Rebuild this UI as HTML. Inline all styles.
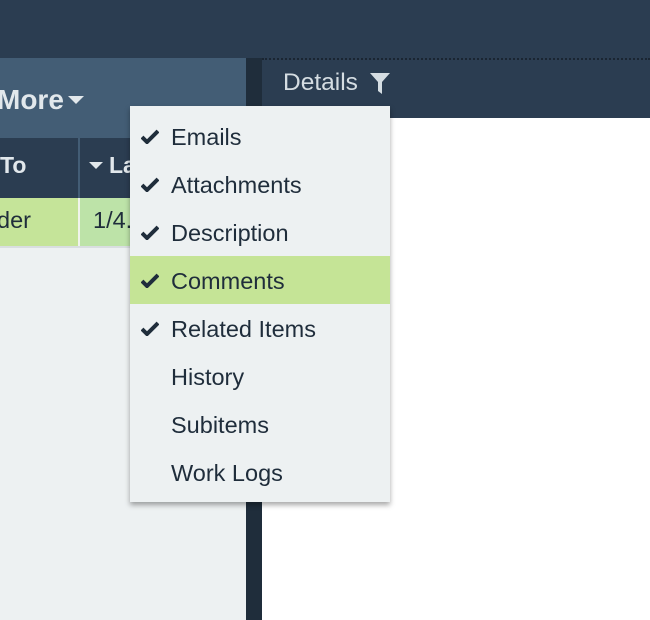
<!DOCTYPE html>
<html><head><style>
*{margin:0;padding:0;box-sizing:border-box}
body{width:650px;height:620px;overflow:hidden;background:#2b3d51;font-family:"Liberation Sans",Arial,sans-serif;position:relative}
.a{position:absolute}
.menu{left:130px;top:106px;width:260px;height:396px;background:#edf1f2;box-shadow:0 3px 5px rgba(0,0,0,.35)}
.it{position:absolute;left:0;width:260px;height:48px;font-size:23.5px;color:#1f2d3b;line-height:50px;padding-left:41px;white-space:nowrap}
.it svg{position:absolute;left:11px;top:17px}
</style></head><body>
<div class="a" style="left:0;top:58px;width:246px;height:80px;background:#435d75"></div>
<div class="a" style="left:-3px;top:84px;font-size:28px;font-weight:bold;color:#e2e8ec">More</div>
<svg class="a" style="left:68px;top:96px" width="16" height="9"><path d="M0 0H16L8 8Z" fill="#e2e8ec"/></svg>
<div class="a" style="left:0;top:138px;width:246px;height:60px;background:#2b3d51"></div>
<div class="a" style="left:78px;top:138px;width:2px;height:60px;background:#435d75"></div>
<div class="a" style="left:0;top:152px;font-size:23px;font-weight:bold;color:#e2e8ec">To</div>
<svg class="a" style="left:89px;top:162px" width="14" height="8"><path d="M0 0H14L7 7Z" fill="#e2e8ec"/></svg>
<div class="a" style="left:109px;top:152px;font-size:23px;font-weight:bold;color:#e2e8ec">La</div>
<div class="a" style="left:0;top:198px;width:78px;height:48px;background:#c5e499"></div>
<div class="a" style="left:78px;top:198px;width:2px;height:48px;background:#f0f4ec"></div>
<div class="a" style="left:80px;top:198px;width:166px;height:48px;background:#bde3a8"></div>
<div class="a" style="left:-3px;top:207px;font-size:23.5px;color:#1f2d3b">der</div>
<div class="a" style="left:93px;top:207px;font-size:23.5px;color:#1f2d3b">1/4.</div>
<div class="a" style="left:0;top:246px;width:246px;height:374px;background:#edf1f2;border-top:2px solid #d9dee0"></div>
<div class="a" style="left:246px;top:58px;width:16px;height:562px;background:#1f2d3b"></div>
<div class="a" style="left:262px;top:58px;width:388px;height:60px;background:#2b3d51;border-top:2px dotted #1a2532"></div>
<div class="a" style="left:262px;top:118px;width:388px;height:502px;background:#fff"></div>
<div class="a" style="left:283px;top:69px;font-size:24.5px;color:#d5dde2">Details</div>
<svg class="a" style="left:370px;top:73px" width="20" height="21"><path d="M0 0H20L12 9V21L8 18V9Z" fill="#d5dde2"/></svg>
<div class="a menu">
<div class="it" style="top:6px"><svg width="18" height="15"><path d="M1 8L6 13L17 2" stroke="#1f2d3b" stroke-width="4" fill="none"/></svg>Emails</div>
<div class="it" style="top:54px"><svg width="18" height="15"><path d="M1 8L6 13L17 2" stroke="#1f2d3b" stroke-width="4" fill="none"/></svg>Attachments</div>
<div class="it" style="top:102px"><svg width="18" height="15"><path d="M1 8L6 13L17 2" stroke="#1f2d3b" stroke-width="4" fill="none"/></svg>Description</div>
<div class="it" style="top:150px;background:#c5e496"><svg width="18" height="15"><path d="M1 8L6 13L17 2" stroke="#1f2d3b" stroke-width="4" fill="none"/></svg>Comments</div>
<div class="it" style="top:198px"><svg width="18" height="15"><path d="M1 8L6 13L17 2" stroke="#1f2d3b" stroke-width="4" fill="none"/></svg>Related Items</div>
<div class="it" style="top:246px">History</div>
<div class="it" style="top:294px">Subitems</div>
<div class="it" style="top:342px">Work Logs</div>
</div>
</body></html>
